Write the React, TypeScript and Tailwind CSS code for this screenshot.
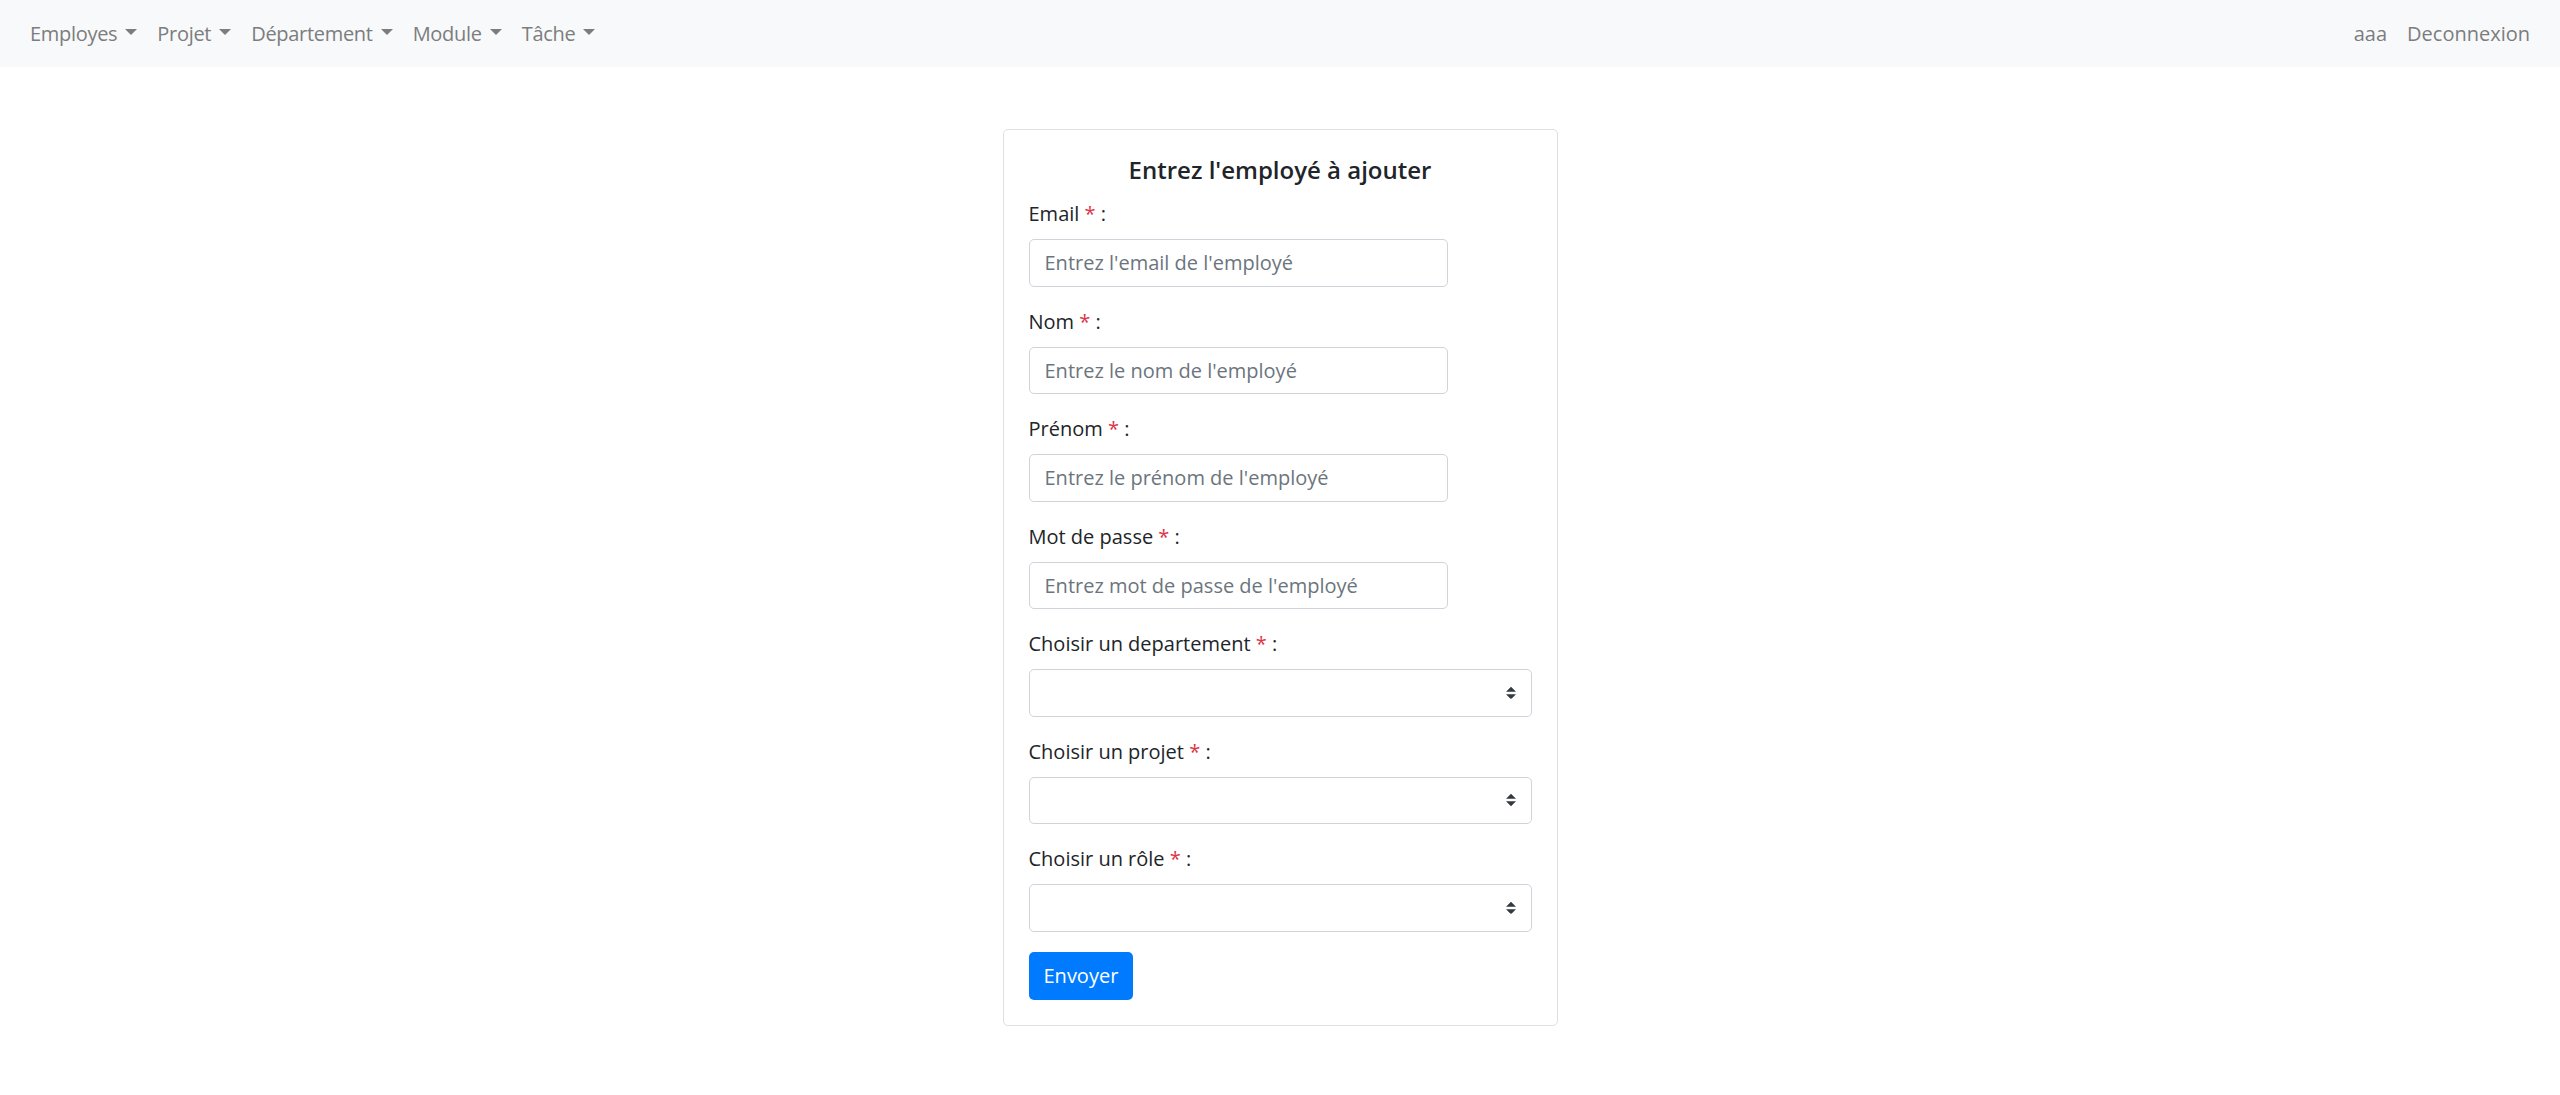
import React from 'react';

const navItems = ['Employes', 'Projet', 'Département', 'Module', 'Tâche'];

// Bootstrap-like dropdown toggle in the navbar
function NavDropdown({ label }: { label: string }) {
  return (
    <a className="flex items-center px-[10px] text-[20px] leading-[30px] tracking-[-0.3px] text-[#7c7d7e] cursor-pointer">
      {label}
      <span className="ml-[8px] mt-[-4px] inline-block w-0 h-0 border-t-[6px] border-t-[#7c7d7e] border-x-[6px] border-x-transparent" />
    </a>
  );
}

function Label({ text }: { text: string }) {
  return (
    <label className="block text-[20px] leading-[30px] mb-[10px] text-[#212529]">
      {text} <span className="text-[#dc3545]">*</span> :
    </label>
  );
}

function InputField({ label, placeholder, type = 'text' }: { label: string; placeholder: string; type?: string }) {
  return (
    <div className="mb-[20px]">
      <Label text={label} />
      <input
        type={type}
        placeholder={placeholder}
        className="block w-[419px] h-[47.5px] px-[15px] text-[20px] text-[#495057] bg-white border border-[#ced4da] rounded-[5px] outline-none placeholder:text-[#6c757d]"
      />
    </div>
  );
}

function SelectField({ label }: { label: string }) {
  return (
    <div className="mb-[20px]">
      <Label text={label} />
      <div className="relative">
        <select className="block w-full h-[47.5px] pl-[15px] pr-[40px] text-[20px] text-[#495057] bg-white border border-[#ced4da] rounded-[5px] outline-none appearance-none">
          <option value=""></option>
        </select>
        {/* double arrow indicator */}
        <svg
          className="absolute right-[16px] top-1/2 -translate-y-1/2 pointer-events-none"
          width="10"
          height="12.5"
          viewBox="0 0 4 5"
        >
          <path fill="#343a40" d="M2 0L0 2h4zm0 5L0 3h4z" />
        </svg>
      </div>
    </div>
  );
}

export default function App() {
  return (
    <div className="min-h-screen bg-white font-['Open_Sans','Noto_Sans',sans-serif] text-[#212529]">
      {/* Navbar */}
      <nav className="h-[67px] bg-[#f8f9fa] flex items-center justify-between px-[20px]">
        <div className="flex items-center">
          {navItems.map((item) => (
            <NavDropdown key={item} label={item} />
          ))}
        </div>
        <div className="flex items-center">
          <a className="px-[10px] text-[20px] leading-[30px] text-[#7c7d7e]">aaa</a>
          <a className="px-[10px] text-[20px] leading-[30px] text-[#7c7d7e]">Deconnexion</a>
        </div>
      </nav>

      {/* Form card */}
      <div className="mx-auto mt-[62px] w-[555px] bg-white border border-[#dfdfdf] rounded-[5px] p-[25px]">
        <h5 className="text-center text-[24px] leading-[30px] font-semibold mb-[14px] text-[#212529]">
          Entrez l'employé à ajouter
        </h5>
        <form onSubmit={(e) => e.preventDefault()}>
          <InputField label="Email" placeholder="Entrez l'email de l'employé" type="email" />
          <InputField label="Nom" placeholder="Entrez le nom de l'employé" />
          <InputField label="Prénom" placeholder="Entrez le prénom de l'employé" />
          <InputField label="Mot de passe" placeholder="Entrez mot de passe de l'employé" type="password" />
          <SelectField label="Choisir un departement" />
          <SelectField label="Choisir un projet" />
          <SelectField label="Choisir un rôle" />
          <button
            type="submit"
            className="block bg-[#007bff] text-white text-[20px] leading-[30px] px-[15px] py-[9px] rounded-[5px]"
          >
            Envoyer
          </button>
        </form>
      </div>
    </div>
  );
}
